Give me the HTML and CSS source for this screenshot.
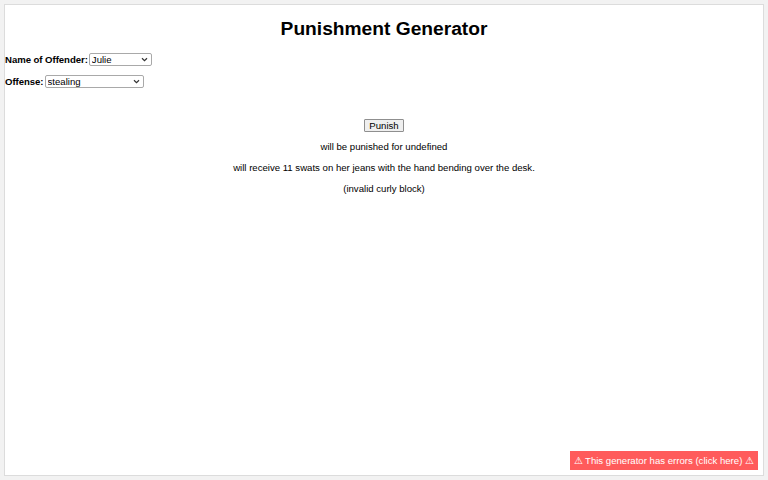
FILE: index.html
```html
<!DOCTYPE html>
<html lang="en">
<head>
  <meta charset="UTF-8" />
  <meta name="viewport" content="width=device-width, initial-scale=1.0"/>
  <title>Punishment Generator</title>
  <link rel="stylesheet" href="styles.css">
</head>
<body>

<div class="frame">
  <h1>Punishment Generator</h1>

  <div class="field">
    <label for="offender">Name of Offender:</label>
    <span class="select-wrap offender">
      <select id="offender">
        <option>Julie</option>
        <option>Anna</option>
        <option>Sarah</option>
      </select>
      <svg class="chevron" width="7" height="5" viewBox="0 0 7 5"><path d="M1 1.2 L3.5 3.6 L6 1.2" fill="none" stroke="#333" stroke-width="1.2"/></svg>
    </span>
  </div>

  <div class="field">
    <label for="offense">Offense:</label>
    <span class="select-wrap offense">
      <select id="offense">
        <option>stealing</option>
        <option>lying</option>
        <option>cheating</option>
      </select>
      <svg class="chevron" width="7" height="5" viewBox="0 0 7 5"><path d="M1 1.2 L3.5 3.6 L6 1.2" fill="none" stroke="#333" stroke-width="1.2"/></svg>
    </span>
  </div>

  <div class="output">
    <button type="button">Punish</button>
    <p>will be punished for undefined</p>
    <p>will receive 11 swats on her jeans with the hand bending over the desk.</p>
    <p>(invalid curly block)</p>
  </div>

  <div class="error-badge">&#9888; This generator has errors (click here) &#9888;</div>
</div>

</body>
</html>
```

FILE: styles.css
```css
body {
  margin: 0;
  padding: 4px;
  background-color: #f2f2f2;
  font-family: "Liberation Sans", Arial, sans-serif;
}

.frame {
  position: relative;
  height: 472px;
  box-sizing: border-box;
  background: #fff;
  border: 1px solid #dcdcdc;
  font-size: 9.6px;
  color: #000;
  overflow: hidden;
}

h1 {
  text-align: center;
  font-size: 19.2px;
  line-height: 24px;
  margin: 12px 0 11px;
}

.field {
  display: flex;
  align-items: center;
  height: 14px;
  margin-bottom: 8px;
}

label {
  font-weight: bold;
  letter-spacing: -0.05px;
}

.select-wrap {
  position: relative;
  display: inline-block;
  margin-left: 1px;
}

select {
  appearance: none;
  -webkit-appearance: none;
  display: block;
  box-sizing: border-box;
  height: 13px;
  padding: 0 0 0 2px;
  border: 1px solid #a9a9a9;
  border-radius: 2px;
  background: #fff;
  color: #000;
  font-family: "Liberation Sans", Arial, sans-serif;
  font-size: 9.6px;
  line-height: 11px;
}

.offender select {
  width: 63px;
}

.offense select {
  width: 99px;
}

.chevron {
  position: absolute;
  right: 4px;
  top: 4px;
  pointer-events: none;
}

.output {
  text-align: center;
  margin-top: 31px;
}

button {
  box-sizing: border-box;
  height: 13px;
  padding: 0 4px;
  border: 1px solid #8f8f8f;
  border-radius: 1px;
  background: #efefef;
  color: #000;
  font-family: "Liberation Sans", Arial, sans-serif;
  font-size: 9.6px;
  line-height: 11px;
}

.output p {
  margin: 9px 0 0;
  line-height: 12px;
}

.error-badge {
  position: absolute;
  right: 5px;
  bottom: 5px;
  background: #ff5b5b;
  color: #fff;
  padding: 4px 4px;
  line-height: 11px;
}
```
